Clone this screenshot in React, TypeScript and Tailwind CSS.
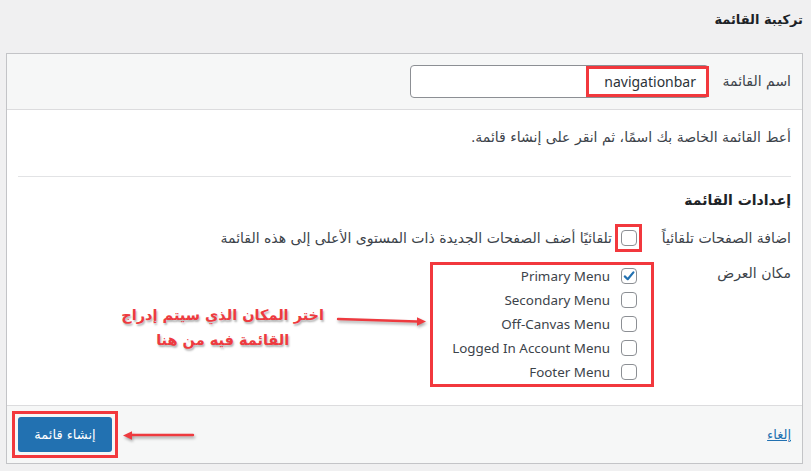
import type { ReactNode } from "react";

const locations = [
  { label: "Primary Menu", checked: true },
  { label: "Secondary Menu", checked: false },
  { label: "Off-Canvas Menu", checked: false },
  { label: "Logged In Account Menu", checked: false },
  { label: "Footer Menu", checked: false },
];

function Checkbox({ checked = false }: { checked?: boolean }) {
  return (
    <span className="w-[16px] h-[16px] shrink-0 rounded-[4px] border border-[#8c8f94] bg-white flex items-center justify-center">
      {checked && (
        <svg width="14" height="14" viewBox="0 0 14 14">
          <path
            d="M2.8 7.4 L5.7 10.2 L11.4 3.4"
            fill="none"
            stroke="#2271b1"
            strokeWidth="2.2"
            strokeLinecap="round"
            strokeLinejoin="round"
          />
        </svg>
      )}
    </span>
  );
}

function RedBox({ children, className }: { children: ReactNode; className: string }) {
  return <div className={`border-[3px] border-[#f2383d] ${className}`}>{children}</div>;
}

function Arrow({ width, dir, className = "" }: { width: number; dir: "left" | "right"; className?: string }) {
  const tip = dir === "right" ? width - 2 : 2;
  const tail = dir === "right" ? 2 : width - 2;
  const back = dir === "right" ? tip - 9 : tip + 9;
  return (
    <svg
      width={width}
      height="14"
      viewBox={`0 0 ${width} 14`}
      className={`shrink-0 drop-shadow-[1px_2px_1.5px_rgba(0,0,0,0.35)] ${className}`}
    >
      <line x1={tail} y1={dir === "right" ? 5 : 7} x2={back} y2={dir === "right" ? 7.5 : 7} stroke="#ee3a3f" strokeWidth="2.4" strokeLinecap="round" />
      <polygon points={`${tip},7.5 ${back},3.2 ${back},11.8`} fill="#ee3a3f" />
    </svg>
  );
}

export default function App() {
  return (
    <div
      dir="rtl"
      className="w-[811px] h-[471px] overflow-hidden bg-[#f0f0f1] text-[14px] text-[#3c434a] font-['DejaVu_Sans',sans-serif]"
    >
      <h2 className="h-[53px] pt-[10px] pr-[8px] text-[13px] font-bold text-[#1d2327]">
        تركيبة القائمة
      </h2>

      <div className="ml-[6px] mr-[8px] border border-[#c3c4c7] bg-white">
        {/* Header: menu name */}
        <div className="h-[56px] flex items-center pr-[11px] bg-[#f6f7f7] border-b border-[#dcdcde]">
          <label className="w-[82px] shrink-0">اسم القائمة</label>
          <div className="relative w-[299px] h-[33px] rounded-[4px] border border-[#8c8f94] bg-white flex items-center pr-[12px] text-[14px] text-[#2c3338] font-['Noto_Sans',sans-serif]">
            navigationbar
            <div className="absolute top-0 bottom-0 right-[-1px] w-[123px] border-[3px] border-[#f2383d]" />
          </div>
        </div>

        {/* Body */}
        <div className="px-[11px] pt-[18px] pb-[18px]">
          <p className="leading-[18px]">أعط القائمة الخاصة بك اسمًا، ثم انقر على إنشاء قائمة.</p>
          <div className="mt-[30px] border-t border-[#e2e3e5]" />
          <h3 className="mt-[14px] leading-[18px] text-[14px] font-bold text-[#1d2327]">إعدادات القائمة</h3>

          <div className="mt-[15px] flex items-center">
            <span className="w-[137px] shrink-0">اضافة الصفحات تلقائياً</span>
            <RedBox className="mr-[12px] w-[27px] h-[28px] flex items-center justify-center">
              <Checkbox />
            </RedBox>
            <span className="mr-[3px]">تلقائيًا أضف الصفحات الجديدة ذات المستوى الأعلى إلى هذه القائمة</span>
          </div>

          <div className="mt-[10px] flex items-start">
            <span className="w-[137px] shrink-0 pt-[2px] leading-[18px]">مكان العرض</span>
            <RedBox className="w-[224px] shrink-0 pr-[14px]">
              <div className="flex flex-col -mt-[1px]">
                {locations.map((loc) => (
                  <div key={loc.label} className="h-[24px] flex items-center gap-[11px] text-[13.4px] font-['Noto_Sans',sans-serif]">
                    <Checkbox checked={loc.checked} />
                    <span>{loc.label}</span>
                  </div>
                ))}
              </div>
            </RedBox>
            <div className="self-center flex items-center mr-[2px]">
              <Arrow width={92} dir="right" className="mb-[8px]" />
              <div className="mr-[12px] mt-[7px] whitespace-nowrap text-center text-[14.5px] leading-[25px] font-bold text-[#ee3a3f] [text-shadow:1px_2px_2px_rgba(0,0,0,0.3)]">
                <div>اختر المكان الذي سيتم إدراج</div>
                <div>القائمة فيه من هنا</div>
              </div>
            </div>
          </div>
        </div>

        {/* Footer */}
        <div className="h-[58px] flex items-center justify-between pr-[11px] pl-[5px] bg-[#f6f7f7] border-t border-[#dcdcde]">
          <a className="text-[#2271b1] text-[13px] underline">إلغاء</a>
          <div className="flex items-center">
            <Arrow width={74} dir="left" />
            <RedBox className="mr-[3px] p-[3px]">
              <button
                type="button"
                className="w-[94px] h-[35px] rounded-[3px] bg-[#2271b1] text-white text-[13px]"
              >
                إنشاء قائمة
              </button>
            </RedBox>
          </div>
        </div>
      </div>
    </div>
  );
}
